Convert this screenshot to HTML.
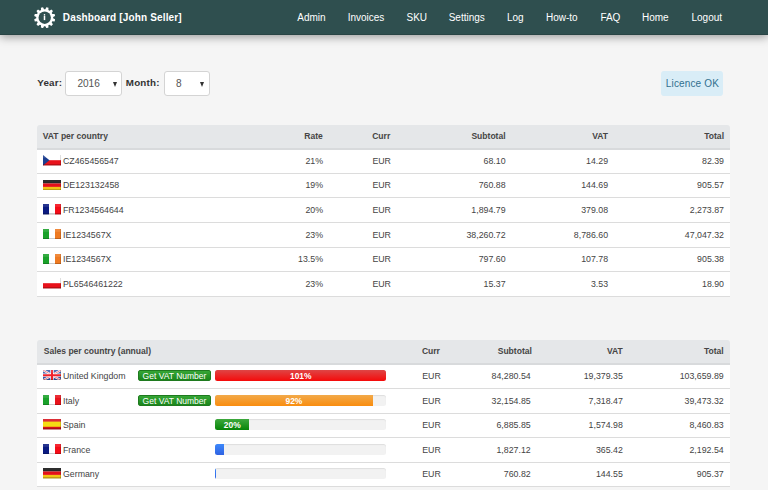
<!DOCTYPE html>
<html><head><meta charset="utf-8">
<style>
*{box-sizing:border-box;margin:0;padding:0}
html,body{width:768px;height:490px;overflow:hidden;background:#f5f5f5;font-family:"Liberation Sans",sans-serif;color:#333;position:relative}
.nav{position:absolute;left:0;top:0;width:768px;height:35px;background:#2f4f4f;box-shadow:0 2px 9px rgba(0,0,0,.38),inset 0 -1px 0 rgba(0,0,0,.12);z-index:2}
.nav .brand{position:absolute;left:62.8px;top:12.4px;font-size:10px;font-weight:bold;color:#fff;letter-spacing:.15px;line-height:12px;white-space:nowrap}
.nav .lk{position:absolute;top:12.2px;font-size:10px;color:#fff;line-height:12px;white-space:nowrap}
.gear{position:absolute;left:34px;top:6.5px;width:21.4px;height:21.4px}
.t{position:absolute;white-space:nowrap;line-height:11px}
.lbl{position:absolute;font-size:9.8px;font-weight:bold;color:#333;letter-spacing:.2px;line-height:12px;white-space:nowrap}
.sel{position:absolute;top:71.3px;height:24.3px;background:#fff;border:1px solid #d4d4d4;border-radius:3px}
.sel span{position:absolute;font-size:10.1px;color:#555;line-height:12px;top:5.3px}
.sel i{position:absolute;top:9.6px;width:0;height:0;border-left:2.8px solid transparent;border-right:2.8px solid transparent;border-top:5px solid #333}
.alert{position:absolute;left:660.8px;top:71.4px;width:62px;height:24.3px;background:#d9edf7;border-radius:3px;color:#31708f;font-size:10px;line-height:12px}
.alert span{position:absolute;left:5px;top:6.4px;letter-spacing:.15px;white-space:nowrap}
.tbl{position:absolute;left:37.2px;width:692.5px}
.th{position:absolute;left:0;top:0;width:100%;height:24.9px;background:#e5e7e9;border-radius:3px 3px 0 0;border-bottom:2.3px solid #d8dadc;z-index:1}
.th .t{font-size:8.55px;font-weight:bold;color:#454545;top:5.5px}
.row{position:absolute;left:0;width:100%;height:24.6px;background:#fff;border-bottom:1px solid #dcdcdc}
.row .t{font-size:8.8px;color:#444;top:6.5px}
.t2 .row .t{top:6.6px}
.t2 .th .t{top:5.8px}
.t2 .flag{top:5.5px}
.flag{position:absolute;left:5.5px;top:6px;width:18px;height:10.4px}
.btn{position:absolute;left:100.8px;top:5.5px;width:73px;height:11px;border-radius:2px;background:linear-gradient(#36a636,#1b861b);border:.6px solid #1f7a1f;color:#fff;font-size:8.5px;line-height:10px;text-align:center;white-space:nowrap}
.prog{position:absolute;left:177.9px;top:5.7px;width:171.4px;height:10.8px;border-radius:2.5px;background:#f2f2f2;box-shadow:inset 0 1px 1px rgba(0,0,0,.08);overflow:hidden}
.bar{position:absolute;left:0;top:0;height:100%;color:#fff;font-size:8.45px;line-height:12.4px;text-align:center;font-weight:bold}
</style></head><body>
<div class="nav">
  <svg class="gear" viewBox="-10.7 -10.7 21.4 21.4"><path d="M0.67 -8.47 L1.66 -10.47 L3.80 -9.90 L3.66 -7.67 L4.81 -7.01 L6.67 -8.24 L8.24 -6.67 L7.01 -4.81 L7.67 -3.66 L9.90 -3.80 L10.47 -1.66 L8.47 -0.67 L8.47 0.67 L10.47 1.66 L9.90 3.80 L7.67 3.66 L7.01 4.81 L8.24 6.67 L6.67 8.24 L4.81 7.01 L3.66 7.67 L3.80 9.90 L1.66 10.47 L0.67 8.47 L-0.67 8.47 L-1.66 10.47 L-3.80 9.90 L-3.66 7.67 L-4.81 7.01 L-6.67 8.24 L-8.24 6.67 L-7.01 4.81 L-7.67 3.66 L-9.90 3.80 L-10.47 1.66 L-8.47 0.67 L-8.47 -0.67 L-10.47 -1.66 L-9.90 -3.80 L-7.67 -3.66 L-7.01 -4.81 L-8.24 -6.67 L-6.67 -8.24 L-4.81 -7.01 L-3.66 -7.67 L-3.80 -9.90 L-1.66 -10.47 L-0.67 -8.47Z" fill="#fff"/><circle r="6.2" fill="#2f4f4f"/><circle cx="-0.2" cy="-2.9" r="0.8" fill="#fff"/><rect x="-0.95" y="-2" width="1.5" height="4.4" fill="#fff"/></svg>
  <div class="brand">Dashboard [John Seller]</div>
  <div class="lk" style="left:297.3px">Admin</div>
  <div class="lk" style="left:347.7px">Invoices</div>
  <div class="lk" style="left:406.5px">SKU</div>
  <div class="lk" style="left:448.7px">Settings</div>
  <div class="lk" style="left:507px">Log</div>
  <div class="lk" style="left:546px">How-to</div>
  <div class="lk" style="left:600.4px">FAQ</div>
  <div class="lk" style="left:642px">Home</div>
  <div class="lk" style="left:691.5px">Logout</div>
</div>

<div class="lbl" style="left:37.2px;top:77px">Year:</div>
<div class="sel" style="left:65.4px;width:57px"><span style="left:11px">2016</span><i style="left:46.5px"></i></div>
<div class="lbl" style="left:125.8px;top:77px">Month:</div>
<div class="sel" style="left:164.3px;width:45.3px"><span style="left:10.8px">8</span><i style="left:34.8px"></i></div>
<div class="alert"><span>Licence OK</span></div>

<div class="tbl" style="top:125.2px;height:171px">
<div class="th"><span class="t" style="left:5.5px">VAT per country</span><span class="t" style="right:406.9px">Rate</span><span class="t" style="left:335.0px">Curr</span><span class="t" style="right:224.1px">Subtotal</span><span class="t" style="right:121.6px">VAT</span><span class="t" style="right:5.7px">Total</span></div>
<div class="row" style="top:24.1px"><svg class="flag" viewBox="0 0 18 11" preserveAspectRatio="none"><rect width="18" height="5.5" fill="#fff"/><rect y="5.5" width="18" height="5.5" fill="#e8121b"/><path d="M0 0L6.5 5.5L0 11Z" fill="#1c3e8f"/><rect x="17.2" width=".8" height="11" fill="rgba(0,0,0,.18)"/><rect y="10" width="18" height="1" fill="rgba(0,0,0,.35)"/><rect width="18" height="3" fill="rgba(255,255,255,.12)"/></svg><span class="t" style="left:25.8px">CZ465456547</span><span class="t" style="right:406.7px">21%</span><span class="t" style="left:335.2px">EUR</span><span class="t" style="right:224.1px">68.10</span><span class="t" style="right:121.6px">14.29</span><span class="t" style="right:5.7px">82.39</span></div>
<div class="row" style="top:48.7px"><svg class="flag" viewBox="0 0 18 11" preserveAspectRatio="none"><rect width="18" height="3.67" fill="#111"/><rect y="3.67" width="18" height="3.67" fill="#e5101a"/><rect y="7.33" width="18" height="3.67" fill="#f2c416"/><rect x="17.2" width=".8" height="11" fill="rgba(0,0,0,.18)"/><rect y="10" width="18" height="1" fill="rgba(0,0,0,.35)"/><rect width="18" height="3" fill="rgba(255,255,255,.12)"/></svg><span class="t" style="left:25.8px">DE123132458</span><span class="t" style="right:406.7px">19%</span><span class="t" style="left:335.2px">EUR</span><span class="t" style="right:224.1px">760.88</span><span class="t" style="right:121.6px">144.69</span><span class="t" style="right:5.7px">905.57</span></div>
<div class="row" style="top:73.3px"><svg class="flag" viewBox="0 0 18 11" preserveAspectRatio="none"><rect width="6" height="11" fill="#0a1a80"/><rect x="6" width="6" height="11" fill="#fff"/><rect x="12" width="6" height="11" fill="#f40c17"/><rect x="17.2" width=".8" height="11" fill="rgba(0,0,0,.18)"/><rect y="10" width="18" height="1" fill="rgba(0,0,0,.35)"/><rect width="18" height="3" fill="rgba(255,255,255,.12)"/></svg><span class="t" style="left:25.8px">FR1234564644</span><span class="t" style="right:406.7px">20%</span><span class="t" style="left:335.2px">EUR</span><span class="t" style="right:224.1px">1,894.79</span><span class="t" style="right:121.6px">379.08</span><span class="t" style="right:5.7px">2,273.87</span></div>
<div class="row" style="top:97.9px"><svg class="flag" viewBox="0 0 18 11" preserveAspectRatio="none"><rect width="6" height="11" fill="#1aa12a"/><rect x="6" width="6" height="11" fill="#fff"/><rect x="12" width="6" height="11" fill="#ee7a22"/><rect x="17.2" width=".8" height="11" fill="rgba(0,0,0,.18)"/><rect y="10" width="18" height="1" fill="rgba(0,0,0,.35)"/><rect width="18" height="3" fill="rgba(255,255,255,.12)"/></svg><span class="t" style="left:25.8px">IE1234567X</span><span class="t" style="right:406.7px">23%</span><span class="t" style="left:335.2px">EUR</span><span class="t" style="right:224.1px">38,260.72</span><span class="t" style="right:121.6px">8,786.60</span><span class="t" style="right:5.7px">47,047.32</span></div>
<div class="row" style="top:122.5px"><svg class="flag" viewBox="0 0 18 11" preserveAspectRatio="none"><rect width="6" height="11" fill="#1aa12a"/><rect x="6" width="6" height="11" fill="#fff"/><rect x="12" width="6" height="11" fill="#ee7a22"/><rect x="17.2" width=".8" height="11" fill="rgba(0,0,0,.18)"/><rect y="10" width="18" height="1" fill="rgba(0,0,0,.35)"/><rect width="18" height="3" fill="rgba(255,255,255,.12)"/></svg><span class="t" style="left:25.8px">IE1234567X</span><span class="t" style="right:406.7px">13.5%</span><span class="t" style="left:335.2px">EUR</span><span class="t" style="right:224.1px">797.60</span><span class="t" style="right:121.6px">107.78</span><span class="t" style="right:5.7px">905.38</span></div>
<div class="row" style="top:147.1px"><svg class="flag" viewBox="0 0 18 11" preserveAspectRatio="none"><rect width="18" height="5.5" fill="#fff"/><rect y="5.5" width="18" height="5.5" fill="#e8121b"/><rect x="17.2" width=".8" height="11" fill="rgba(0,0,0,.18)"/><rect y="10" width="18" height="1" fill="rgba(0,0,0,.35)"/><rect width="18" height="3" fill="rgba(255,255,255,.12)"/></svg><span class="t" style="left:25.8px">PL6546461222</span><span class="t" style="right:406.7px">23%</span><span class="t" style="left:335.2px">EUR</span><span class="t" style="right:224.1px">15.37</span><span class="t" style="right:121.6px">3.53</span><span class="t" style="right:5.7px">18.90</span></div>
</div>
<div class="tbl t2" style="top:340px;height:150px">
<div class="th"><span class="t" style="left:6.5px">Sales per country (annual)</span><span class="t" style="left:384.7px">Curr</span><span class="t" style="right:197.8px">Subtotal</span><span class="t" style="right:106.9px">VAT</span><span class="t" style="right:6.0px">Total</span></div>
<div class="row" style="top:24.6px"><svg class="flag" viewBox="0 0 18 11" preserveAspectRatio="none"><rect width="18" height="11" fill="#3a56a6"/><path d="M0 0L18 11M18 0L0 11" stroke="#fff" stroke-width="2.2"/><path d="M0 0L18 11M18 0L0 11" stroke="#e8505a" stroke-width="0.8"/><path d="M9 0V11M0 5.5H18" stroke="#fff" stroke-width="3.4"/><path d="M9 0V11M0 5.5H18" stroke="#f0202a" stroke-width="2"/><rect x="17.2" width=".8" height="11" fill="rgba(0,0,0,.18)"/><rect y="10" width="18" height="1" fill="rgba(0,0,0,.35)"/><rect width="18" height="3" fill="rgba(255,255,255,.12)"/></svg><span class="t" style="left:25.8px">United Kingdom</span><div class="btn">Get VAT Number</div><div class="prog"><div class="bar" style="width:100%;background:linear-gradient(#df4545,#f50a0a)">101%</div></div><span class="t" style="left:385.0px">EUR</span><span class="t" style="right:199.0px">84,280.54</span><span class="t" style="right:106.9px">19,379.35</span><span class="t" style="right:6.0px">103,659.89</span></div>
<div class="row" style="top:49.2px"><svg class="flag" viewBox="0 0 18 11" preserveAspectRatio="none"><rect width="6" height="11" fill="#1aa12a"/><rect x="6" width="6" height="11" fill="#fff"/><rect x="12" width="6" height="11" fill="#e8121b"/><rect x="17.2" width=".8" height="11" fill="rgba(0,0,0,.18)"/><rect y="10" width="18" height="1" fill="rgba(0,0,0,.35)"/><rect width="18" height="3" fill="rgba(255,255,255,.12)"/></svg><span class="t" style="left:25.8px">Italy</span><div class="btn">Get VAT Number</div><div class="prog"><div class="bar" style="width:92%;background:linear-gradient(#f2a94a,#f98d0e)">92%</div></div><span class="t" style="left:385.0px">EUR</span><span class="t" style="right:199.0px">32,154.85</span><span class="t" style="right:106.9px">7,318.47</span><span class="t" style="right:6.0px">39,473.32</span></div>
<div class="row" style="top:73.7px"><svg class="flag" viewBox="0 0 18 11" preserveAspectRatio="none"><rect width="18" height="11" fill="#d8121b"/><rect y="2.75" width="18" height="5.5" fill="#f5dc14"/><rect x="17.2" width=".8" height="11" fill="rgba(0,0,0,.18)"/><rect y="10" width="18" height="1" fill="rgba(0,0,0,.35)"/><rect width="18" height="3" fill="rgba(255,255,255,.12)"/></svg><span class="t" style="left:25.8px">Spain</span><div class="prog"><div class="bar" style="width:20%;background:linear-gradient(#3da83d,#078507)">20%</div></div><span class="t" style="left:385.0px">EUR</span><span class="t" style="right:199.0px">6,885.85</span><span class="t" style="right:106.9px">1,574.98</span><span class="t" style="right:6.0px">8,460.83</span></div>
<div class="row" style="top:98.2px"><svg class="flag" viewBox="0 0 18 11" preserveAspectRatio="none"><rect width="6" height="11" fill="#0a1a80"/><rect x="6" width="6" height="11" fill="#fff"/><rect x="12" width="6" height="11" fill="#f40c17"/><rect x="17.2" width=".8" height="11" fill="rgba(0,0,0,.18)"/><rect y="10" width="18" height="1" fill="rgba(0,0,0,.35)"/><rect width="18" height="3" fill="rgba(255,255,255,.12)"/></svg><span class="t" style="left:25.8px">France</span><div class="prog"><div class="bar" style="width:5%;background:linear-gradient(#3c88fb,#2f62e2)"></div></div><span class="t" style="left:385.0px">EUR</span><span class="t" style="right:199.0px">1,827.12</span><span class="t" style="right:106.9px">365.42</span><span class="t" style="right:6.0px">2,192.54</span></div>
<div class="row" style="top:122.8px"><svg class="flag" viewBox="0 0 18 11" preserveAspectRatio="none"><rect width="18" height="3.67" fill="#111"/><rect y="3.67" width="18" height="3.67" fill="#e5101a"/><rect y="7.33" width="18" height="3.67" fill="#f2c416"/><rect x="17.2" width=".8" height="11" fill="rgba(0,0,0,.18)"/><rect y="10" width="18" height="1" fill="rgba(0,0,0,.35)"/><rect width="18" height="3" fill="rgba(255,255,255,.12)"/></svg><span class="t" style="left:25.8px">Germany</span><div class="prog"><div class="bar" style="width:0.6%;background:linear-gradient(#3c88fb,#2f62e2)"></div></div><span class="t" style="left:385.0px">EUR</span><span class="t" style="right:199.0px">760.82</span><span class="t" style="right:106.9px">144.55</span><span class="t" style="right:6.0px">905.37</span></div>
</div>
</body></html>
